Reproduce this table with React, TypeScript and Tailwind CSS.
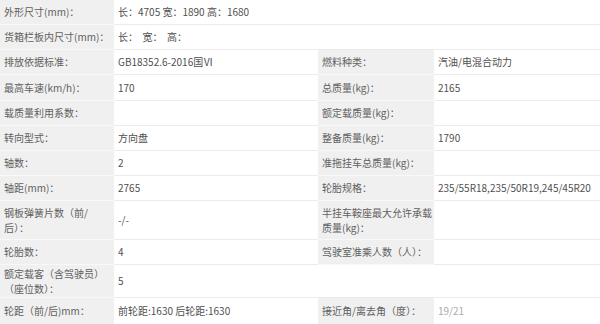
import React from 'react';

type Row = {
  h: number;
  cells: { label: string; value: string; span?: boolean }[];
};

const rows: Row[] = [
  { h: 24, cells: [{ label: '外形尺寸(mm)：', value: '长：4705 宽：1890 高：1680', span: true }] },
  { h: 25, cells: [{ label: '货箱栏板内尺寸(mm)：', value: '长：  宽：  高：', span: true }] },
  {
    h: 25,
    cells: [
      { label: '排放依据标准：', value: 'GB18352.6-2016国Ⅵ' },
      { label: '燃料种类：', value: '汽油/电混合动力' },
    ],
  },
  {
    h: 26,
    cells: [
      { label: '最高车速(km/h)：', value: '170' },
      { label: '总质量(kg)：', value: '2165' },
    ],
  },
  {
    h: 25,
    cells: [
      { label: '载质量利用系数：', value: '' },
      { label: '额定载质量(kg)：', value: '' },
    ],
  },
  {
    h: 25,
    cells: [
      { label: '转向型式：', value: '方向盘' },
      { label: '整备质量(kg)：', value: '1790' },
    ],
  },
  {
    h: 25,
    cells: [
      { label: '轴数：', value: '2' },
      { label: '准拖挂车总质量(kg)：', value: '' },
    ],
  },
  {
    h: 25,
    cells: [
      { label: '轴距(mm)：', value: '2765' },
      { label: '轮胎规格：', value: '235/55R18,235/50R19,245/45R20' },
    ],
  },
  {
    h: 39,
    cells: [
      { label: '钢板弹簧片数（前/后）：', value: '-/-' },
      { label: '半挂车鞍座最大允许承载质量(kg)：', value: '' },
    ],
  },
  {
    h: 25,
    cells: [
      { label: '轮胎数：', value: '4' },
      { label: '驾驶室准乘人数（人）：', value: '' },
    ],
  },
  { h: 33, cells: [{ label: '额定载客（含驾驶员）（座位数）：', value: '5', span: true }] },
  {
    h: 27,
    cells: [
      { label: '轮距（前/后)mm：', value: '前轮距:1630 后轮距:1630' },
      { label: '接近角/离去角（度）：', value: '19/21' },
    ],
  },
];

export default function App() {
  return (
    <div className="w-[600px] h-[324px] overflow-hidden bg-white font-['Noto_Sans_CJK_SC',sans-serif] text-[10px] leading-[15px]">
      <table className="w-[600px] table-fixed border-collapse">
        <colgroup>
          <col className="w-[114px]" />
          <col className="w-[204px]" />
          <col className="w-[116px]" />
          <col className="w-[166px]" />
        </colgroup>
        <tbody>
          {rows.map((row, i) => (
            <tr key={i} style={{ height: row.h }}>
              {row.cells.map((c, j) => (
                <React.Fragment key={j}>
                  <td
                    className={
                      j === 0
                        ? i === 1
                          ? 'bg-[#f0f0f0] text-[#606060] pl-1 pr-0 whitespace-nowrap align-middle border-b border-[#f8f8f8]'
                          : 'bg-[#f0f0f0] text-[#606060] pl-1 pr-2 align-middle border-b border-[#f8f8f8]'
                        : 'bg-[#f0f0f0] text-[#606060] pl-1 pr-0 align-middle border-b border-[#f8f8f8]'
                    }
                  >
                    {c.label}
                  </td>
                  <td
                    colSpan={c.span ? 3 : 1}
                    className={
                      i === 11 && j === 1
                        ? 'text-[#aaa] pl-1 pr-0 align-middle border-b border-[#ebebeb] whitespace-pre'
                        : 'text-[#505050] pl-1 pr-0 align-middle border-b border-[#ebebeb] whitespace-pre'
                    }
                  >
                    {c.value}
                  </td>
                </React.Fragment>
              ))}
            </tr>
          ))}
        </tbody>
      </table>
    </div>
  );
}
